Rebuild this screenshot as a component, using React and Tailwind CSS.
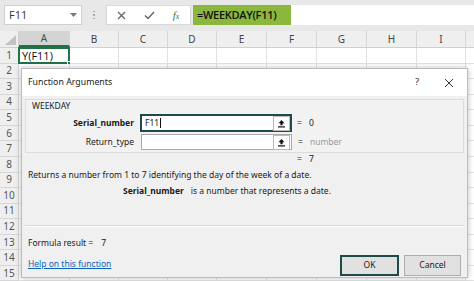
import React from "react";

const COLS = [
  { n: "A", w: 51 },
  { n: "B", w: 49 },
  { n: "C", w: 49 },
  { n: "D", w: 49 },
  { n: "E", w: 50 },
  { n: "F", w: 50 },
  { n: "G", w: 50 },
  { n: "H", w: 50 },
  { n: "I", w: 49 },
  { n: "", w: 50 },
];

const ROWS = Array.from({ length: 15 }, (_, i) => i + 1);

function CollapseBtn() {
  return (
    <div className="w-[17px] h-[15px] border border-[#b9b9b9] bg-white flex items-center justify-center shrink-0">
      <svg width="9" height="9" viewBox="0 0 9 9">
        <path d="M4.5 1 L1.5 4.2 H3.4 V6.3 H5.6 V4.2 H7.5 Z" fill="#111" />
        <rect x="1" y="7.3" width="7" height="1.2" fill="#111" />
      </svg>
    </div>
  );
}

export default function App() {
  return (
    <div className="w-[474px] h-[281px] relative overflow-hidden bg-white font-['Noto_Sans',sans-serif] text-[#222]">
      {/* Formula bar */}
      <div className="h-[31px] bg-[#e8e8e8] flex items-center pl-[4px] pb-[1px]">
        <div className="w-[78px] h-[20px] bg-white border border-[#d0d0d0] flex items-center pl-[4px] pr-[4px]">
          <span className="text-[11px] text-[#333] flex-1 font-['Open_Sans',sans-serif]">F11</span>
          <svg width="7" height="4" viewBox="0 0 7 4">
            <path d="M0 0 H7 L3.5 4 Z" fill="#777" />
          </svg>
        </div>
        <div className="w-[24px] flex flex-col items-center gap-[2px]">
          <div className="w-[1.5px] h-[1.5px] bg-[#a8a8a8]" />
          <div className="w-[1.5px] h-[1.5px] bg-[#a8a8a8]" />
          <div className="w-[1.5px] h-[1.5px] bg-[#a8a8a8]" />
        </div>
        <div className="w-[85px] h-[20px] bg-white border border-[#d8d8d8] flex items-center">
          <div className="w-[29px] flex justify-center">
            <svg width="9" height="9" viewBox="0 0 9 9">
              <path d="M1 1 L8 8 M8 1 L1 8" stroke="#666" strokeWidth="1.3" />
            </svg>
          </div>
          <div className="w-[26px] flex justify-center">
            <svg width="11" height="9" viewBox="0 0 11 9">
              <path d="M1 4.5 L4 7.5 L10 1" stroke="#666" strokeWidth="1.5" fill="none" />
            </svg>
          </div>
          <div className="w-[28px] flex justify-center">
            <span className="italic font-['Liberation_Serif',serif] text-[11px] text-[#3d7a3d] leading-none">
              f<span className="text-[8px]">x</span>
            </span>
          </div>
        </div>
        <div className="ml-[2px] flex-1 h-[20px] bg-white flex items-stretch">
          <div className="w-[98px] bg-[#8bb73d] flex items-center pl-[4px]">
            <span className="text-[11px] font-semibold text-[#111] tracking-[-0.3px] font-['Open_Sans',sans-serif]">
              =WEEKDAY(F11)
            </span>
          </div>
        </div>
      </div>

      {/* Column headers */}
      <div className="flex h-[17px] bg-[#efefef] border-b border-[#d0d0d0]">
        <div className="w-[19px] shrink-0 flex items-end justify-end pr-[2px] pb-[2px] border-r border-[#d0d0d0]">
          <svg width="11" height="10" viewBox="0 0 11 10">
            <path d="M11 0 V10 H0 Z" fill="#c2c2c2" />
          </svg>
        </div>
        {COLS.map((c, i) => (
          <div
            key={i}
            style={{ width: c.w }}
            className={`shrink-0 flex items-center justify-center text-[10px] border-r border-[#d6d6d6] ${
              i === 0 ? "bg-[#d4d4d4] text-[#3a5a3a] border-b-2 border-b-[#217346]" : "text-[#444]"
            }`}
          >
            {c.n}
          </div>
        ))}
      </div>

      {/* Rows */}
      {ROWS.map((r) => (
        <div key={r} className="flex h-[15.57px]">
          <div className="w-[19px] shrink-0 bg-[#efefef] border-r border-b border-[#d6d6d6] flex items-center justify-center text-[10px] text-[#555]">
            {r}
          </div>
          {COLS.map((c, i) => (
            <div
              key={i}
              style={{ width: c.w }}
              className="shrink-0 border-r border-b border-[#e2e2e2] relative"
            >
              {r === 1 && i === 0 && (
                <div className="absolute -left-[1px] -top-[1px] w-[52px] h-[16.5px] border-2 border-[#217346] flex items-center pl-[2px]">
                  <span className="text-[11px] text-[#111] leading-none font-['Open_Sans',sans-serif]">Y(F11)</span>
                  <div className="absolute -right-[3px] -bottom-[3px] w-[4px] h-[4px] bg-[#217346] border border-white" />
                </div>
              )}
            </div>
          ))}
        </div>
      ))}

      {/* Dialog */}
      <div className="absolute left-[21px] top-[68px] w-[447px] h-[210px] flex flex-col border border-[#bdbdbd] shadow-[0_0_6px_rgba(0,0,0,0.25)] text-[8.5px] text-[#1a1a1a]">
        <div className="h-[27px] bg-white flex items-center pl-[6px] shrink-0">
          <span className="text-[8.8px] flex-1">Function Arguments</span>
          <span className="text-[9.5px] text-[#333] w-[14px] text-center mr-[8px]">?</span>
          <div className="w-[35px] flex justify-center pr-[2px]">
            <svg width="10" height="10" viewBox="0 0 10 10">
              <path d="M1 1 L9 9 M9 1 L1 9" stroke="#333" strokeWidth="1" />
            </svg>
          </div>
        </div>
        <div className="flex-1 bg-[#f0f0f0] flex flex-col px-[3px]">
          {/* Group box */}
          <div className="mt-[3px] w-[439px] h-[54px] border border-[#dcdcdc] bg-[#f2f2f2] flex flex-col">
            <div className="h-[13px] flex items-center pl-[6px]">WEEKDAY</div>
            <div className="mt-[1px] h-[18px] flex items-center">
              <div className="w-[109px] text-right font-bold pr-[1px]">Serial_number</div>
              <div className="ml-[5px] w-[152px] h-[18px] border-2 border-[#1e4b4a] bg-white flex items-center pl-[3px]">
                <span className="flex-1 flex items-center">
                  F11<span className="inline-block w-px h-[10px] bg-[#111] ml-px" />
                </span>
                <CollapseBtn />
              </div>
              <span className="ml-[5px]">=</span>
              <span className="ml-[7px]">0</span>
            </div>
            <div className="mt-[2px] h-[16px] flex items-center">
              <div className="w-[109px] text-right pr-[1px]">Return_type</div>
              <div className="ml-[6px] w-[151px] h-[16px] border border-[#a9a9a9] bg-white flex items-center justify-end pr-[1px]">
                <CollapseBtn />
              </div>
              <span className="ml-[6px]">=</span>
              <span className="ml-[7px] text-[#9a9a9a]">number</span>
            </div>
          </div>
          <div className="h-[12px] flex items-center pl-[272px]">
            <span>=</span>
            <span className="ml-[7px]">7</span>
          </div>
          <div className="mt-[4px] h-[12px] flex items-center pl-[3px]">
            Returns a number from 1 to 7 identifying the day of the week of a date.
          </div>
          <div className="mt-[4px] h-[12px] flex items-center pl-[98px]">
            <span className="font-bold">Serial_number</span>
            <span className="ml-[7px]">is a number that represents a date.</span>
          </div>
          <div className="mt-[28px] w-[439px] border-t border-[#dadada] border-b border-b-white" />
          <div className="mt-[10px] h-[12px] flex items-center pl-[3px]">
            <span>Formula result =</span>
            <span className="ml-[8px]">7</span>
          </div>
          <div className="mt-[6px] h-[21px] flex items-center pl-[3px]">
            <span className="flex-1 text-[#0b63c1] underline pb-[3px]">Help on this function</span>
            <div className="w-[59px] h-[21px] border-2 border-[#1e4b4a] bg-[#e1e1e1] flex items-center justify-center">
              OK
            </div>
            <div className="ml-[5px] mr-[3px] w-[57px] h-[21px] border border-[#adadad] bg-[#e1e1e1] flex items-center justify-center">
              Cancel
            </div>
          </div>
        </div>
      </div>
    </div>
  );
}
